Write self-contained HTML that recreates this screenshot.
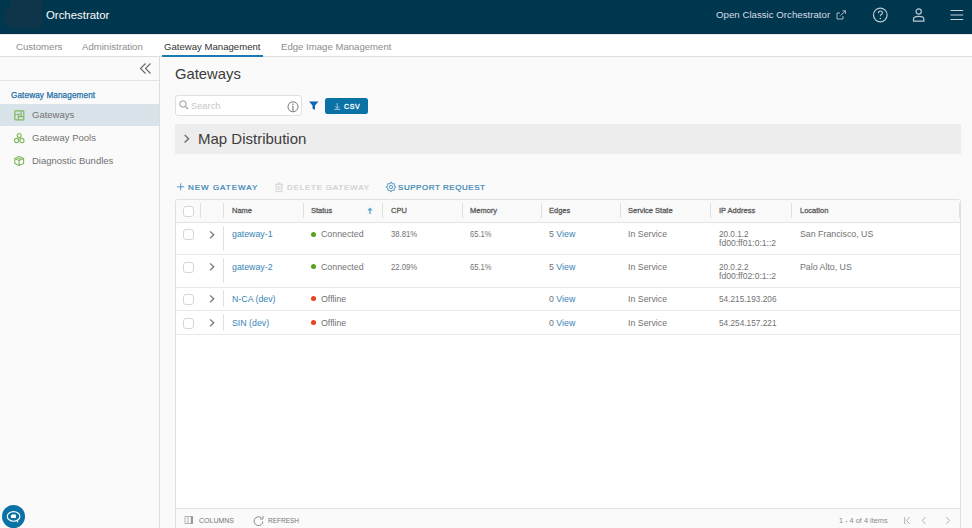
<!DOCTYPE html>
<html><head><meta charset="utf-8">
<style>
*{box-sizing:border-box;margin:0;padding:0}
html,body{width:972px;height:528px;overflow:hidden;background:#fafafa;font-family:"Liberation Sans",sans-serif;color:#565656}
.abs{position:absolute;white-space:nowrap;line-height:1}
svg{position:absolute;overflow:visible}
#hdr{position:absolute;left:0;top:0;width:972px;height:34px;background:#01364f}
#tabs{position:absolute;left:0;top:34px;width:972px;height:23px;background:#fff;border-bottom:1px solid #dedede}
.tab{position:absolute;top:8px;font-size:9.6px;color:#8c8c8c;line-height:1;white-space:nowrap}
#side{position:absolute;left:0;top:57px;width:160px;height:471px;background:#fafafa;border-right:1px solid #dedede}
.si{font-size:9.5px;color:#727272}
#grid{position:absolute;left:175px;top:199px;width:786px;height:340px;background:#fff;border:1px solid #e0e0e0;border-radius:3px}
.gh{position:absolute;left:0;top:0;width:784px;height:23px;background:#fafafa;border-bottom:1px solid #e3e3e3}
.sep{position:absolute;width:1px;background:#e0e0e0}
.th{font-size:7.5px;color:#5e5e5e;-webkit-text-stroke:0.3px #5e5e5e}
.cb{position:absolute;width:11px;height:11px;border:1px solid #d6d6d6;border-radius:3px;background:#fff}
.rowb{position:absolute;left:0;width:784px;height:1px;background:#e8e8e8}
.td{font-size:8.8px;color:#727272;font-variant-ligatures:none}
.lnk{color:#3784b5}
.dot{position:absolute;width:5px;height:5px;border-radius:50%}
</style></head><body>
<div id="hdr">
  <svg style="left:0;top:0" width="50" height="34"><path d="M11 0 H42 Q43 2 42.5 6 V22 Q43 27 38 28 L22 28.6 Q10 28.5 5 23 Q2.5 20 3.2 16 Q5 10 11 5 Z" fill="#0f354b"/></svg>
  <div class="abs" style="left:46px;top:10px;font-size:11.4px;color:#fff">Orchestrator</div>
  <div class="abs" style="left:716px;top:10px;font-size:9.7px;color:#d5dee3">Open Classic Orchestrator</div>
  <!-- external link -->
  <svg style="left:836px;top:10px" width="11" height="11" viewBox="0 0 11 11"><path d="M4 3 H1 V9 H7 V6" fill="none" stroke="#a3b6c0" stroke-width="1"/><path d="M4.5 5.5 L9.5 0.8 M6.5 0.8 H9.5 V3.8" fill="none" stroke="#a3b6c0" stroke-width="1"/></svg>
  <!-- help -->
  <svg style="left:872px;top:7px" width="17" height="17" viewBox="0 0 17 17"><circle cx="8.3" cy="8" r="6.8" fill="none" stroke="#b9cad2" stroke-width="1.2"/><path d="M6.4 6.2 Q6.4 4 8.4 4 Q10.4 4 10.4 5.9 Q10.4 7.2 8.9 7.8 Q8.3 8.1 8.3 9.3" fill="none" stroke="#b9cad2" stroke-width="1.1"/><circle cx="8.3" cy="11.4" r="0.75" fill="#b9cad2"/></svg>
  <!-- user -->
  <svg style="left:912px;top:8px" width="14" height="15" viewBox="0 0 14 15"><circle cx="6.7" cy="3.5" r="2.6" fill="none" stroke="#b9cad2" stroke-width="1.2"/><path d="M1.5 13.2 V11.2 Q1.5 8.4 6.7 8.4 Q11.9 8.4 11.9 11.2 V13.2 Z" fill="none" stroke="#b9cad2" stroke-width="1.2"/></svg>
  <!-- hamburger -->
  <svg style="left:950px;top:9px" width="14" height="12" viewBox="0 0 14 12"><path d="M0.5 1.5 H13.2 M0.5 6 H13.2 M0.5 10.5 H13.2" stroke="#c5d3da" stroke-width="1"/></svg>
</div>
<div id="tabs"><div class="abs" style="left:0;top:0;width:972px;height:1px;background:#e6eaec"></div>
  <div class="tab" style="left:16px">Customers</div>
  <div class="tab" style="left:82px">Administration</div>
  <div class="tab" style="left:164px;color:#333">Gateway Management</div>
  <div class="tab" style="left:281px">Edge Image Management</div>
  <div class="abs" style="left:162px;top:21px;width:101px;height:2px;background:#1a7bb0"></div>
</div>
<div id="side">
  <svg style="left:139px;top:6px" width="14" height="12" viewBox="0 0 14 12"><path d="M6.5 0.5 L1.5 5.5 L6.5 10.5 M11.5 0.5 L6.5 5.5 L11.5 10.5" fill="none" stroke="#666" stroke-width="1.1"/></svg>
  <div class="abs" style="left:0;top:23px;width:159px;height:1px;background:#e3e3e3"></div>
  <div class="abs" style="left:11px;top:35px;font-size:8.2px;color:#2370ab;-webkit-text-stroke:0.25px #2370ab;letter-spacing:0.1px">Gateway Management</div>
  <div class="abs" style="left:0;top:47px;width:159px;height:22px;background:#d8e3ea"></div>
  <!-- gateways icon -->
  <svg style="left:14px;top:53px" width="11" height="11" viewBox="0 0 11 11"><rect x="0.8" y="0.8" width="9" height="9" rx="0.8" fill="none" stroke="#80ba5e" stroke-width="1.2"/><path d="M0.8 4.3 H7.2 M7.2 0.8 V6.6 M4.3 4.3 V9.8 M4.3 6.6 H9.8" fill="none" stroke="#80ba5e" stroke-width="1.1"/></svg>
  <div class="abs si" style="left:32px;top:53px">Gateways</div>
  <!-- pools icon -->
  <svg style="left:14px;top:76px" width="11" height="11" viewBox="0 0 11 11"><circle cx="5.2" cy="2.5" r="2" fill="none" stroke="#80ba5e" stroke-width="1.1"/><circle cx="2.6" cy="7.5" r="2.1" fill="none" stroke="#80ba5e" stroke-width="1.1"/><circle cx="7.9" cy="7.5" r="2.1" fill="none" stroke="#80ba5e" stroke-width="1.1"/><path d="M5.2 4.5 V5.6" fill="none" stroke="#80ba5e" stroke-width="1.1"/></svg>
  <div class="abs si" style="left:32px;top:76px">Gateway Pools</div>
  <!-- bundle icon -->
  <svg style="left:14px;top:99px" width="11" height="11" viewBox="0 0 11 11"><path d="M5.2 0.5 L9.6 2.5 V7.5 L5.1 9.6 L0.8 7.5 V2.5 Z M0.8 2.5 L5.1 4.6 L9.6 2.5 M5.1 4.6 V9.6 M3 1.5 L7.4 3.5" fill="none" stroke="#80ba5e" stroke-width="1.1" stroke-linejoin="round"/></svg>
  <div class="abs si" style="left:32px;top:99px">Diagnostic Bundles</div>
  <!-- chat -->
  <svg style="left:1px;top:447px" width="26" height="26" viewBox="0 0 26 26"><circle cx="12.5" cy="12.5" r="11.5" fill="#0b72a6"/><ellipse cx="12.6" cy="12.4" rx="6.3" ry="4.8" fill="none" stroke="#fff" stroke-width="1.1"/><path d="M15.3 16.5 L17.3 19.2 L16.9 15.8" fill="#fff"/><path d="M9.8 12 Q9.8 11 11 10.8 L11.8 9.9 L12.5 10.6 H14.9 V13.9 H10.6 Q9.8 13.6 9.8 12.8 Z" fill="#fff"/></svg>
</div>
<div id="main">
  <div class="abs" style="left:175px;top:67px;font-size:14.8px;color:#3a3a3a">Gateways</div>
  <!-- search -->
  <div class="abs" style="left:175px;top:95px;width:127px;height:21px;background:#fff;border:1px solid #e0e0e0;border-radius:3px"></div>
  <svg style="left:179px;top:100px" width="10" height="10" viewBox="0 0 10 10"><circle cx="4" cy="4" r="3.2" fill="none" stroke="#9a9a9a" stroke-width="1"/><path d="M6.4 6.4 L9 9" stroke="#9a9a9a" stroke-width="1.1"/></svg>
  <div class="abs" style="left:191px;top:102px;font-size:9.3px;color:#c6c6c6">Search</div>
  <svg style="left:287px;top:101px" width="12" height="12" viewBox="0 0 12 12"><circle cx="6" cy="5.8" r="5" fill="none" stroke="#777" stroke-width="1"/><path d="M6 5 V9 M5.2 9 H6.8 M5.3 5 H6" stroke="#777" stroke-width="1"/><circle cx="6" cy="3.3" r="0.7" fill="#777"/></svg>
  <!-- filter -->
  <svg style="left:309px;top:101px" width="10" height="10" viewBox="0 0 10 10"><path d="M0 0.6 H9.5 L6 4.5 V9 L3.5 7.6 V4.5 Z" fill="#0f65b3"/></svg>
  <!-- csv -->
  <div class="abs" style="left:325px;top:98px;width:43px;height:16px;background:#0b72a6;border-radius:2.5px"></div>
  <svg style="left:334px;top:103px" width="7" height="7" viewBox="0 0 7 7"><path d="M3.2 0 V5.2 M1.2 3.3 L3.2 5.4 L5.2 3.3 M0.3 6.4 H6.2" fill="none" stroke="#d6e8f2" stroke-width="0.7"/></svg>
  <div class="abs" style="left:344px;top:103px;font-size:7px;color:#fff;-webkit-text-stroke:0.3px #fff;letter-spacing:0.6px">CSV</div>
  <!-- map distribution -->
  <div class="abs" style="left:175px;top:124px;width:786px;height:30px;background:#ededed"></div>
  <svg style="left:183px;top:134px" width="8" height="10" viewBox="0 0 8 10"><path d="M1.6 0.9 L5.6 4.7 L1.6 8.5" fill="none" stroke="#666" stroke-width="1.3"/></svg>
  <div class="abs" style="left:198px;top:131px;font-size:15px;color:#3d3d3d">Map Distribution</div>
  <!-- actions -->
  <svg style="left:177px;top:183px" width="8" height="8" viewBox="0 0 8 8"><path d="M3.7 0.3 V7.3 M0.2 3.8 H7.2" stroke="#4a90bd" stroke-width="0.9"/></svg>
  <div class="abs" style="left:188px;top:184.3px;font-size:8px;color:#3582b2;-webkit-text-stroke:0.22px #3582b2;letter-spacing:1px">NEW GATEWAY</div>
  <svg style="left:275px;top:182px" width="9" height="11" viewBox="0 0 9 11"><path d="M0.3 2.4 H7.9 M2.9 2.4 V1.1 H5.3 V2.4 M1.2 2.4 V9.6 H7 V2.4 M3.2 4 V8.2 M5 4 V8.2" fill="none" stroke="#d3d3d3" stroke-width="0.9"/></svg>
  <div class="abs" style="left:287px;top:184.3px;font-size:8px;color:#cfcfcf;-webkit-text-stroke:0.22px #cfcfcf;letter-spacing:0.78px">DELETE GATEWAY</div>
  <svg style="left:386px;top:182px" width="10" height="10" viewBox="0 0 10 10"><path d="M4.36 1.36 L4.48 0.33 L5.52 0.33 L5.64 1.36 L7.13 1.97 L7.94 1.33 L8.67 2.06 L8.03 2.87 L8.64 4.36 L9.67 4.48 L9.67 5.52 L8.64 5.64 L8.03 7.13 L8.67 7.94 L7.94 8.67 L7.13 8.03 L5.64 8.64 L5.52 9.67 L4.48 9.67 L4.36 8.64 L2.87 8.03 L2.06 8.67 L1.33 7.94 L1.97 7.13 L1.36 5.64 L0.33 5.52 L0.33 4.48 L1.36 4.36 L1.97 2.87 L1.33 2.06 L2.06 1.33 L2.87 1.97 Z" fill="none" stroke="#4a90c0" stroke-width="0.9" stroke-linejoin="round"/><circle cx="5" cy="5" r="1.6" fill="none" stroke="#4a90c0" stroke-width="0.9"/></svg>
  <div class="abs" style="left:398px;top:184.3px;font-size:8px;color:#3582b2;-webkit-text-stroke:0.22px #3582b2;letter-spacing:0.55px">SUPPORT REQUEST</div>

  <!-- grid -->
  <div class="abs" style="left:175px;top:199px;width:786px;height:340px;background:#fff;border:1px solid #e0e0e0;border-radius:3px"></div>
  <div class="abs" style="left:176px;top:200px;width:784px;height:22px;background:#fafafa"></div>
  <div class="abs" style="left:176px;top:222px;width:784px;height:1px;background:#e3e3e3"></div>
  <div class="abs" style="left:176px;top:254px;width:784px;height:1px;background:#e8e8e8"></div>
  <div class="abs" style="left:176px;top:287px;width:784px;height:1px;background:#e8e8e8"></div>
  <div class="abs" style="left:176px;top:310px;width:784px;height:1px;background:#e8e8e8"></div>
  <div class="abs" style="left:176px;top:334px;width:784px;height:1px;background:#e8e8e8"></div>
  <div class="abs" style="left:176px;top:508px;width:784px;height:1px;background:#e3e3e3"></div>
  <div class="abs" style="left:176px;top:509px;width:784px;height:19px;background:#fafafa"></div>
  <!-- header seps -->
  <div class="sep" style="left:200px;top:203px;height:15px"></div>
  <div class="sep" style="left:223px;top:203px;height:15px"></div>
  <div class="sep" style="left:303px;top:203px;height:15px"></div>
  <div class="sep" style="left:382px;top:203px;height:15px"></div>
  <div class="sep" style="left:462px;top:203px;height:15px"></div>
  <div class="sep" style="left:541px;top:203px;height:15px"></div>
  <div class="sep" style="left:620px;top:203px;height:15px"></div>
  <div class="sep" style="left:710px;top:203px;height:15px"></div>
  <div class="sep" style="left:791px;top:203px;height:15px"></div>
  <div class="sep" style="left:959px;top:203px;height:15px"></div>
  <!-- row seps (expand col) -->
  <div class="sep" style="left:223px;top:226px;height:25px"></div>
  <div class="sep" style="left:223px;top:258px;height:25px"></div>
  <div class="sep" style="left:223px;top:290px;height:17px"></div>
  <div class="sep" style="left:223px;top:314px;height:17px"></div>
  <!-- checkboxes -->
  <div class="cb" style="left:183px;top:206px"></div>
  <div class="cb" style="left:183px;top:229px"></div>
  <div class="cb" style="left:183px;top:262px"></div>
  <div class="cb" style="left:183px;top:294px"></div>
  <div class="cb" style="left:183px;top:318px"></div>
  <!-- header text -->
  <div class="abs th" style="left:232px;top:207px">Name</div>
  <div class="abs th" style="left:311px;top:207px">Status</div>
  <svg style="left:367px;top:207px" width="7" height="8" viewBox="0 0 7 8"><path d="M3 2.5 V7" fill="none" stroke="#5aa3cf" stroke-width="1.3"/><path d="M0.4 3.6 L3 0.6 L5.6 3.6 Z" fill="#5aa3cf"/></svg>
  <div class="abs th" style="left:391px;top:207px">CPU</div>
  <div class="abs th" style="left:470px;top:207px">Memory</div>
  <div class="abs th" style="left:549px;top:207px">Edges</div>
  <div class="abs th" style="left:628px;top:207px">Service State</div>
  <div class="abs th" style="left:719px;top:207px">IP Address</div>
  <div class="abs th" style="left:800px;top:207px">Location</div>
  <!-- chevrons -->
  <svg style="left:209px;top:231px" width="6" height="9" viewBox="0 0 6 9"><path d="M1.2 0.4 L4.7 3.8 L1.2 7.2" fill="none" stroke="#777" stroke-width="1.3"/></svg>
  <svg style="left:209px;top:263px" width="6" height="9" viewBox="0 0 6 9"><path d="M1.2 0.4 L4.7 3.8 L1.2 7.2" fill="none" stroke="#777" stroke-width="1.3"/></svg>
  <svg style="left:209px;top:295px" width="6" height="9" viewBox="0 0 6 9"><path d="M1.2 0.4 L4.7 3.8 L1.2 7.2" fill="none" stroke="#777" stroke-width="1.3"/></svg>
  <svg style="left:209px;top:319px" width="6" height="9" viewBox="0 0 6 9"><path d="M1.2 0.4 L4.7 3.8 L1.2 7.2" fill="none" stroke="#777" stroke-width="1.3"/></svg>
  <!-- row 1 -->
  <div class="abs td lnk" style="left:232px;top:230px">gateway-1</div>
  <div class="dot" style="left:311px;top:232px;background:#5aa220"></div>
  <div class="abs td" style="left:321px;top:230px">Connected</div>
  <div class="abs td" style="left:391px;top:230px;transform:scaleX(0.88);transform-origin:0 0">38.81%</div>
  <div class="abs td" style="left:470px;top:230px;transform:scaleX(0.86);transform-origin:0 0">65.1%</div>
  <div class="abs td" style="left:549px;top:230px">5 <span class="lnk">View</span></div>
  <div class="abs td" style="left:628px;top:230px">In Service</div>
  <div class="abs td" style="left:719px;top:230px;transform:scaleX(0.93);transform-origin:0 0">20.0.1.2</div>
  <div class="abs td" style="left:719px;top:239px;transform:scaleX(0.976);transform-origin:0 0">fd00:ff01:0:1::2</div>
  <div class="abs td" style="left:800px;top:230px">San Francisco, US</div>
  <!-- row 2 -->
  <div class="abs td lnk" style="left:232px;top:263px">gateway-2</div>
  <div class="dot" style="left:311px;top:264px;background:#5aa220"></div>
  <div class="abs td" style="left:321px;top:263px">Connected</div>
  <div class="abs td" style="left:391px;top:263px;transform:scaleX(0.88);transform-origin:0 0">22.09%</div>
  <div class="abs td" style="left:470px;top:263px;transform:scaleX(0.86);transform-origin:0 0">65.1%</div>
  <div class="abs td" style="left:549px;top:263px">5 <span class="lnk">View</span></div>
  <div class="abs td" style="left:628px;top:263px">In Service</div>
  <div class="abs td" style="left:719px;top:263px;transform:scaleX(0.93);transform-origin:0 0">20.0.2.2</div>
  <div class="abs td" style="left:719px;top:272px;transform:scaleX(0.976);transform-origin:0 0">fd00:ff02:0:1::2</div>
  <div class="abs td" style="left:800px;top:263px">Palo Alto, US</div>
  <!-- row 3 -->
  <div class="abs td lnk" style="left:232px;top:295px">N-CA (dev)</div>
  <div class="dot" style="left:311px;top:296px;background:#e8431d"></div>
  <div class="abs td" style="left:321px;top:295px">Offline</div>
  <div class="abs td" style="left:549px;top:295px">0 <span class="lnk">View</span></div>
  <div class="abs td" style="left:628px;top:295px">In Service</div>
  <div class="abs td" style="left:719px;top:295px;transform:scaleX(0.94);transform-origin:0 0">54.215.193.206</div>
  <!-- row 4 -->
  <div class="abs td lnk" style="left:232px;top:319px">SIN (dev)</div>
  <div class="dot" style="left:311px;top:320px;background:#e8431d"></div>
  <div class="abs td" style="left:321px;top:319px">Offline</div>
  <div class="abs td" style="left:549px;top:319px">0 <span class="lnk">View</span></div>
  <div class="abs td" style="left:628px;top:319px">In Service</div>
  <div class="abs td" style="left:719px;top:319px;transform:scaleX(0.94);transform-origin:0 0">54.254.157.221</div>
  <!-- footer -->
  <svg style="left:184px;top:516px" width="10" height="9" viewBox="0 0 10 9"><path d="M1 0.5 H8 M1 7.5 H8 M1 0.5 V7.5 M4 0.5 V7.5" fill="none" stroke="#aaa" stroke-width="0.9"/><rect x="6.8" y="0.1" width="2.2" height="7.8" fill="#999"/></svg>
  <div class="abs" style="left:199px;top:517px;font-size:7px;color:#777">COLUMNS</div>
  <svg style="left:253px;top:515px" width="12" height="12" viewBox="0 0 12 12"><path d="M9.9 6.4 A4.4 4.4 0 1 1 8.2 2.7" fill="none" stroke="#8a8a8a" stroke-width="1"/><path d="M10 1 V4 H7" fill="none" stroke="#8a8a8a" stroke-width="1"/></svg>
  <div class="abs" style="left:268px;top:518px;font-size:6.5px;color:#777">REFRESH</div>
  <div class="abs" style="left:839px;top:517px;font-size:7.35px;color:#8a8a8a">1 - 4 of 4 items</div>
  <svg style="left:904px;top:516px" width="7" height="9" viewBox="0 0 7 9"><path d="M0.7 1 V8 M5.8 1 L2.6 4.5 L5.8 8" fill="none" stroke="#aaa" stroke-width="0.9"/></svg>
  <svg style="left:921px;top:516px" width="6" height="9" viewBox="0 0 6 9"><path d="M4.5 1 L1.3 4.5 L4.5 8" fill="none" stroke="#aaa" stroke-width="0.9"/></svg>
  <svg style="left:945px;top:516px" width="6" height="9" viewBox="0 0 6 9"><path d="M1.3 1 L4.5 4.5 L1.3 8" fill="none" stroke="#aaa" stroke-width="0.9"/></svg>
</div>
</body></html>
